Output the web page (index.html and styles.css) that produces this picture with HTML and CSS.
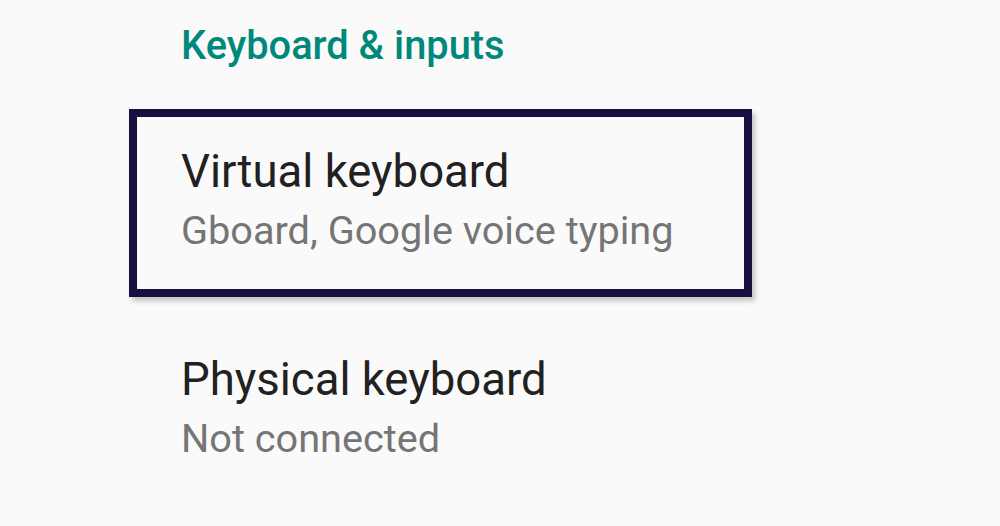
FILE: index.html
```html
<!DOCTYPE html>
<html>
<head>
<meta charset="utf-8">
<link rel="stylesheet" href="styles.css">
</head>
<body>
<div class="screen">
  <div class="category">Keyboard &amp; inputs</div>
  <div class="item highlighted">
    <div class="title">Virtual keyboard</div>
    <div class="summary">Gboard, Google voice typing</div>
  </div>
  <div class="item">
    <div class="title">Physical keyboard</div>
    <div class="summary">Not connected</div>
  </div>
</div>
</body>
</html>
```
FILE: styles.css
```css
html, body {
  margin: 0;
  padding: 0;
  background: #fafafa;
}
.screen {
  width: 1000px;
  height: 526px;
  overflow: hidden;
  font-family: Roboto, "Noto Sans", sans-serif;
  display: flex;
  flex-direction: column;
  padding-left: 129px;
  box-sizing: border-box;
}
.category {
  color: #00897b;
  font-weight: 500;
  font-size: 39.8px;
  line-height: 48px;
  padding-left: 52px;
  padding-top: 22px;
  height: 109px;
  box-sizing: border-box;
}
.item {
  width: 623px;
  box-sizing: border-box;
  padding-left: 52px;
  padding-top: 55px;
}
.highlighted {
  height: 188px;
  border: 8px solid #15103f;
  padding-left: 44px;
  padding-top: 27px;
  box-shadow: 3px 4px 5px rgba(0,0,0,0.22);
}
.title {
  color: #212121;
  font-size: 45.5px;
  line-height: 56px;
}
.summary {
  color: #757575;
  font-size: 39.7px;
  line-height: 62px;
}
```
